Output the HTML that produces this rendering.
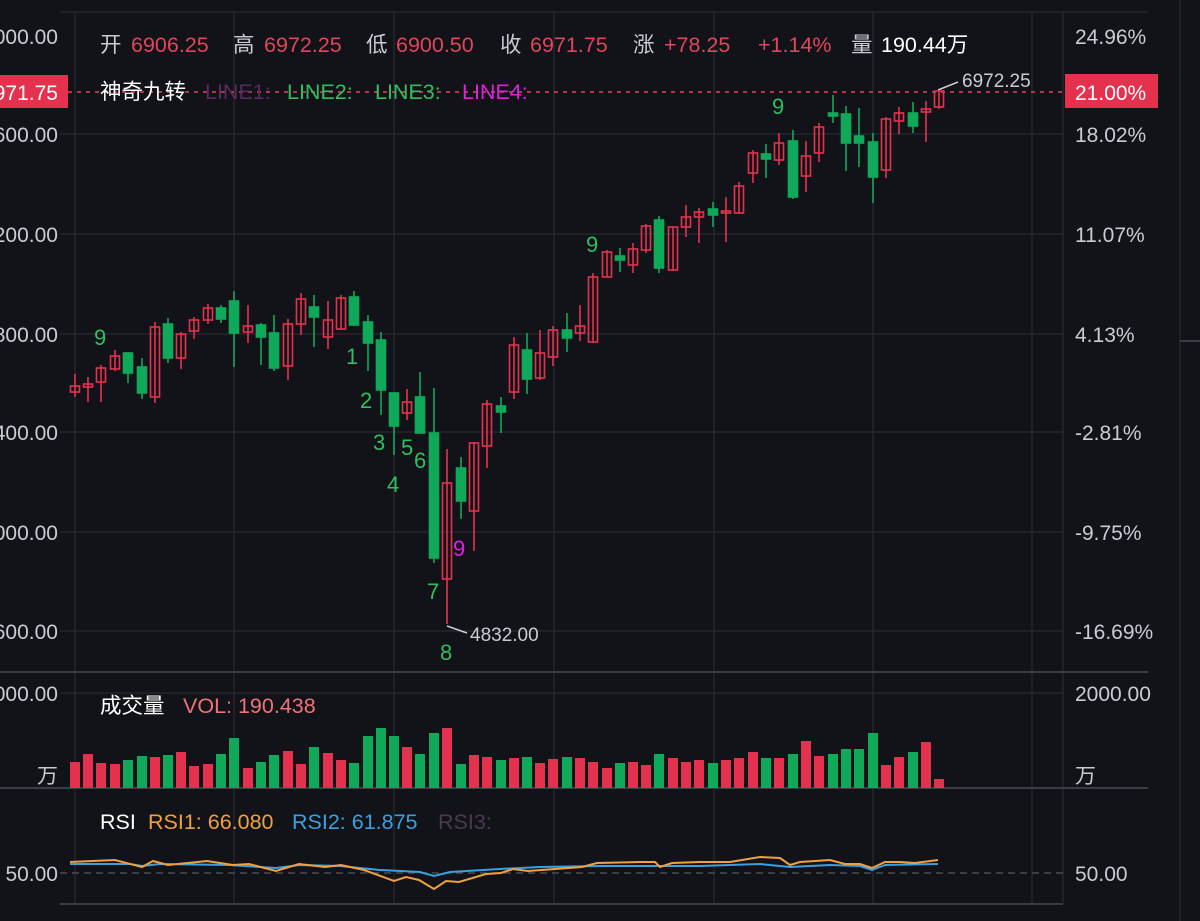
<!DOCTYPE html>
<html><head><meta charset="utf-8"><style>
html,body{margin:0;padding:0;background:#121318;}
svg{display:block}
text{font-family:"Liberation Sans","Noto Sans CJK SC",sans-serif;}
</style></head><body>
<svg width="1200" height="921" viewBox="0 0 1200 921" xmlns="http://www.w3.org/2000/svg">
<rect width="1200" height="921" fill="#121318"/>
<g stroke="#24262d" stroke-width="1.5">
<line x1="60" y1="12" x2="1148" y2="12"/>
<line x1="60" y1="134" x2="1063" y2="134"/>
<line x1="60" y1="234" x2="1063" y2="234"/>
<line x1="60" y1="334" x2="1063" y2="334"/>
<line x1="60" y1="432" x2="1063" y2="432"/>
<line x1="60" y1="532" x2="1063" y2="532"/>
<line x1="60" y1="631" x2="1063" y2="631"/>
<line x1="60" y1="693" x2="1063" y2="693"/>
<line x1="75" y1="12" x2="75" y2="904"/>
<line x1="234" y1="12" x2="234" y2="904"/>
<line x1="394" y1="12" x2="394" y2="904"/>
<line x1="554" y1="12" x2="554" y2="904"/>
<line x1="714" y1="12" x2="714" y2="904"/>
<line x1="873" y1="12" x2="873" y2="904"/>
<line x1="1032" y1="12" x2="1032" y2="904"/>
<line x1="1063" y1="12" x2="1063" y2="904"/>
<line x1="1180" y1="0" x2="1180" y2="921"/>
</g>
<g stroke="#3a3d45" stroke-width="2">
<line x1="0" y1="672" x2="1148" y2="672"/>
<line x1="0" y1="788" x2="1148" y2="788"/>
<line x1="60" y1="904" x2="1063" y2="904"/>
<line x1="1180" y1="341" x2="1200" y2="341"/>
</g>
<line x1="68" y1="92" x2="1063" y2="92" stroke="#e0455a" stroke-width="1.5" stroke-dasharray="4,5"/>
<line x1="60" y1="873" x2="1063" y2="873" stroke="#4a4d55" stroke-width="1.5" stroke-dasharray="7,5"/>

<g font-size="21" fill="#c8ccd4">
<g text-anchor="end">
<text x="58" y="44">7000.00</text>
<text x="58" y="142">6600.00</text>
<text x="58" y="242">6200.00</text>
<text x="58" y="342">5800.00</text>
<text x="58" y="440">5400.00</text>
<text x="58" y="540">5000.00</text>
<text x="58" y="639">4600.00</text>
<text x="58" y="701">2000.00</text>
<text x="58" y="881">50.00</text>
</g>
<text x="37" y="783">万</text>
<text x="1075" y="44">24.96%</text>
<text x="1075" y="142">18.02%</text>
<text x="1075" y="242">11.07%</text>
<text x="1075" y="342">4.13%</text>
<text x="1075" y="440">-2.81%</text>
<text x="1075" y="540">-9.75%</text>
<text x="1075" y="639">-16.69%</text>
<text x="1075" y="701">2000.00</text>
<text x="1075" y="783">万</text>
<text x="1075" y="881">50.00</text>
</g>
<rect x="0" y="75" width="68" height="33" fill="#e4324e"/>
<text x="58" y="100" font-size="21" fill="#fff" text-anchor="end">6971.75</text>
<rect x="1065" y="74" width="93" height="34" fill="#e4324e"/>
<text x="1075" y="100" font-size="21" fill="#fff">21.00%</text>

<g font-size="21.5">
<text x="100" y="52" fill="#c8ccd4">开</text><text x="131" y="52" fill="#e0455a">6906.25</text>
<text x="233" y="52" fill="#c8ccd4">高</text><text x="264" y="52" fill="#e0455a">6972.25</text>
<text x="366" y="52" fill="#c8ccd4">低</text><text x="396" y="52" fill="#e0455a">6900.50</text>
<text x="500" y="52" fill="#c8ccd4">收</text><text x="530" y="52" fill="#e0455a">6971.75</text>
<text x="633" y="52" fill="#c8ccd4">涨</text><text x="664" y="52" fill="#e0455a">+78.25</text>
<text x="758" y="52" fill="#e0455a">+1.14%</text>
<text x="851" y="52" fill="#c8ccd4">量</text><text x="881" y="52" fill="#fff">190.44万</text>
<text x="100" y="99" fill="#fff">神奇九转</text>
<text x="205" y="99" fill="#5a2a5e">LINE1:</text>
<text x="287" y="99" fill="#2fbf5f">LINE2:</text>
<text x="375" y="99" fill="#2fbf5f">LINE3:</text>
<text x="462" y="99" fill="#e020e0">LINE4:</text>
<text x="100" y="713" fill="#fff">成交量</text>
<text x="183" y="713" fill="#f07278">VOL: 190.438</text>
<text x="100" y="829" fill="#fff">RSI</text>
<text x="148" y="829" fill="#f0a040">RSI1: 66.080</text>
<text x="292" y="829" fill="#3aa0e0">RSI2: 61.875</text>
<text x="438" y="829" fill="#4a3a50">RSI3:</text>
</g>

<g font-size="22" fill="#2fbf5f">
<text x="94" y="345">9</text><text x="346" y="364">1</text><text x="360" y="408">2</text>
<text x="373" y="450">3</text><text x="387" y="492">4</text><text x="401" y="455">5</text>
<text x="414" y="468">6</text><text x="427" y="599">7</text><text x="440" y="660">8</text>
<text x="586" y="252">9</text><text x="772" y="114">9</text>
<text x="453" y="556" fill="#e020e0">9</text>
</g>
<g font-size="19" fill="#c8ccd4">
<text x="962" y="87">6972.25</text>
<text x="470" y="641">4832.00</text>
</g>
<line x1="938" y1="90" x2="958" y2="82" stroke="#c8ccd4" stroke-width="1.5"/>
<line x1="447" y1="626" x2="467" y2="633" stroke="#c8ccd4" stroke-width="1.5"/>

<g stroke="#e4324e" stroke-width="1.6" fill="none">
<path d="M75 374V397M88 377V402M101 365V402M115 350V371M155 322V403M181 332V369M194 317V339M208 304V324M248 305V343M288 319V380M301 293V335M328 301V349M341 295V330M407 389V420M447 449V624M474 442V551M487 400V468M514 337V399M540 330V380M553 326V366M580 305V341M593 273V343M607 250V277M633 243V273M646 224V253M673 227V271M686 205V237M699 208V243M726 197V242M739 182V214M753 150V183M779 133V165M806 141V192M819 123V162M886 117V178M899 107V134M926 101V142M939 90V109"/>
<rect x="70.5" y="386" width="9" height="6"/><rect x="83.5" y="384" width="9" height="3"/><rect x="96.5" y="368" width="9" height="14"/><rect x="110.5" y="356" width="9" height="13"/><rect x="150.5" y="327" width="9" height="70"/><rect x="176.5" y="334" width="9" height="24"/><rect x="189.5" y="320" width="9" height="11"/><rect x="203.5" y="308" width="9" height="12"/><rect x="243.5" y="326" width="9" height="6"/><rect x="283.5" y="324" width="9" height="42"/><rect x="296.5" y="299" width="9" height="25"/><rect x="323.5" y="320" width="9" height="17"/><rect x="336.5" y="298" width="9" height="31"/><rect x="402.5" y="402" width="9" height="11"/><rect x="442.5" y="483" width="9" height="96"/><rect x="469.5" y="443" width="9" height="68"/><rect x="482.5" y="404" width="9" height="42"/><rect x="509.5" y="345" width="9" height="47"/><rect x="535.5" y="353" width="9" height="25"/><rect x="548.5" y="330" width="9" height="27"/><rect x="575.5" y="326" width="9" height="7"/><rect x="588.5" y="277" width="9" height="65"/><rect x="602.5" y="252" width="9" height="25"/><rect x="628.5" y="249" width="9" height="16"/><rect x="641.5" y="226" width="9" height="24"/><rect x="668.5" y="227" width="9" height="43"/><rect x="681.5" y="217" width="9" height="10"/><rect x="694.5" y="212" width="9" height="5"/><rect x="721.5" y="211" width="9" height="2"/><rect x="734.5" y="186" width="9" height="27"/><rect x="748.5" y="153" width="9" height="20"/><rect x="774.5" y="143" width="9" height="17"/><rect x="801.5" y="156" width="9" height="20"/><rect x="814.5" y="127" width="9" height="26"/><rect x="881.5" y="119" width="9" height="51"/><rect x="894.5" y="113" width="9" height="8"/><rect x="921.5" y="109" width="9" height="3"/><rect x="934.5" y="91" width="9" height="16"/>
</g>
<g stroke="#10a95a" stroke-width="1.6" fill="#10a95a">
<path d="M128 352V383M142 358V399M168 318V363M221 305V323M234 291V367M261 323V365M274 315V371M314 295V347M354 291V326M368 315V371M381 332V415M394 392V455M420 372V433M434 388V563M461 457V519M501 397V433M527 333V394M567 313V352M620 248V272M659 216V273M713 202V227M766 144V178M793 130V199M833 95V123M846 106V171M859 108V167M873 133V203M913 102V133"/>
<rect x="123.5" y="353" width="9" height="20"/><rect x="137.5" y="367" width="9" height="26"/><rect x="163.5" y="324" width="9" height="34"/><rect x="216.5" y="308" width="9" height="11"/><rect x="229.5" y="301" width="9" height="32"/><rect x="256.5" y="325" width="9" height="12"/><rect x="269.5" y="333" width="9" height="35"/><rect x="309.5" y="307" width="9" height="10"/><rect x="349.5" y="297" width="9" height="28"/><rect x="363.5" y="322" width="9" height="21"/><rect x="376.5" y="340" width="9" height="50"/><rect x="389.5" y="393" width="9" height="33"/><rect x="415.5" y="397" width="9" height="36"/><rect x="429.5" y="433" width="9" height="125"/><rect x="456.5" y="468" width="9" height="33"/><rect x="496.5" y="406" width="9" height="6"/><rect x="522.5" y="350" width="9" height="29"/><rect x="562.5" y="330" width="9" height="8"/><rect x="615.5" y="256" width="9" height="4"/><rect x="654.5" y="220" width="9" height="48"/><rect x="708.5" y="209" width="9" height="6"/><rect x="761.5" y="154" width="9" height="5"/><rect x="788.5" y="141" width="9" height="56"/><rect x="828.5" y="113" width="9" height="3"/><rect x="841.5" y="114" width="9" height="29"/><rect x="854.5" y="136" width="9" height="7"/><rect x="868.5" y="142" width="9" height="35"/><rect x="908.5" y="113" width="9" height="13"/>
</g>

<g fill="#e4324e">
<rect x="70" y="762" width="10" height="26"/><rect x="83" y="754" width="10" height="34"/><rect x="96" y="763" width="10" height="25"/><rect x="110" y="764" width="10" height="24"/><rect x="150" y="757" width="10" height="31"/><rect x="176" y="752" width="10" height="36"/><rect x="189" y="766" width="10" height="22"/><rect x="203" y="764" width="10" height="24"/><rect x="243" y="768" width="10" height="20"/><rect x="283" y="751" width="10" height="37"/><rect x="296" y="764" width="10" height="24"/><rect x="323" y="753" width="10" height="35"/><rect x="336" y="760" width="10" height="28"/><rect x="402" y="747" width="10" height="41"/><rect x="442" y="728" width="10" height="60"/><rect x="469" y="755" width="10" height="33"/><rect x="482" y="757" width="10" height="31"/><rect x="509" y="758" width="10" height="30"/><rect x="535" y="763" width="10" height="25"/><rect x="548" y="759" width="10" height="29"/><rect x="575" y="758" width="10" height="30"/><rect x="588" y="762" width="10" height="26"/><rect x="602" y="768" width="10" height="20"/><rect x="628" y="762" width="10" height="26"/><rect x="641" y="765" width="10" height="23"/><rect x="668" y="758" width="10" height="30"/><rect x="681" y="762" width="10" height="26"/><rect x="694" y="760" width="10" height="28"/><rect x="721" y="760" width="10" height="28"/><rect x="734" y="758" width="10" height="30"/><rect x="748" y="752" width="10" height="36"/><rect x="774" y="758" width="10" height="30"/><rect x="801" y="741" width="10" height="47"/><rect x="814" y="756" width="10" height="32"/><rect x="881" y="765" width="10" height="23"/><rect x="894" y="757" width="10" height="31"/><rect x="921" y="742" width="10" height="46"/><rect x="934" y="779" width="10" height="9"/>
</g>
<g fill="#10a95a">
<rect x="123" y="760" width="10" height="28"/><rect x="137" y="756" width="10" height="32"/><rect x="163" y="755" width="10" height="33"/><rect x="216" y="754" width="10" height="34"/><rect x="229" y="738" width="10" height="50"/><rect x="256" y="762" width="10" height="26"/><rect x="269" y="755" width="10" height="33"/><rect x="309" y="747" width="10" height="41"/><rect x="349" y="763" width="10" height="25"/><rect x="363" y="736" width="10" height="52"/><rect x="376" y="728" width="10" height="60"/><rect x="389" y="736" width="10" height="52"/><rect x="415" y="754" width="10" height="34"/><rect x="429" y="733" width="10" height="55"/><rect x="456" y="764" width="10" height="24"/><rect x="496" y="760" width="10" height="28"/><rect x="522" y="757" width="10" height="31"/><rect x="562" y="757" width="10" height="31"/><rect x="615" y="763" width="10" height="25"/><rect x="654" y="754" width="10" height="34"/><rect x="708" y="763" width="10" height="25"/><rect x="761" y="758" width="10" height="30"/><rect x="788" y="754" width="10" height="34"/><rect x="828" y="754" width="10" height="34"/><rect x="841" y="749" width="10" height="39"/><rect x="854" y="749" width="10" height="39"/><rect x="868" y="733" width="10" height="55"/><rect x="908" y="752" width="10" height="36"/>
</g>

<polyline fill="none" stroke="#3aa0e0" stroke-width="2" points="70,864 130,864 142,866 160,864 230,865 276,868 300,865 340,866 380,870 420,872 434,876 450,872 500,869 540,867 600,866 650,866 700,866 760,864 790,867 830,865 860,866 872,870 885,865 938,864"/>
<polyline fill="none" stroke="#f0a040" stroke-width="2" points="70,862 115,860 142,867 153,861 168,865 207,861 233,865 249,864 276,871 299,864 325,867 341,865 364,870 394,881 406,877 419,880 434,889 446,881 459,882 486,874 501,873 513,869 528,871 555,869 582,867 597,863 640,862 655,862 660,867 672,863 700,862 730,862 760,857 780,858 790,865 800,862 830,860 845,864 860,864 872,868 885,862 900,862 915,863 938,860"/>
</svg>
</body></html>
